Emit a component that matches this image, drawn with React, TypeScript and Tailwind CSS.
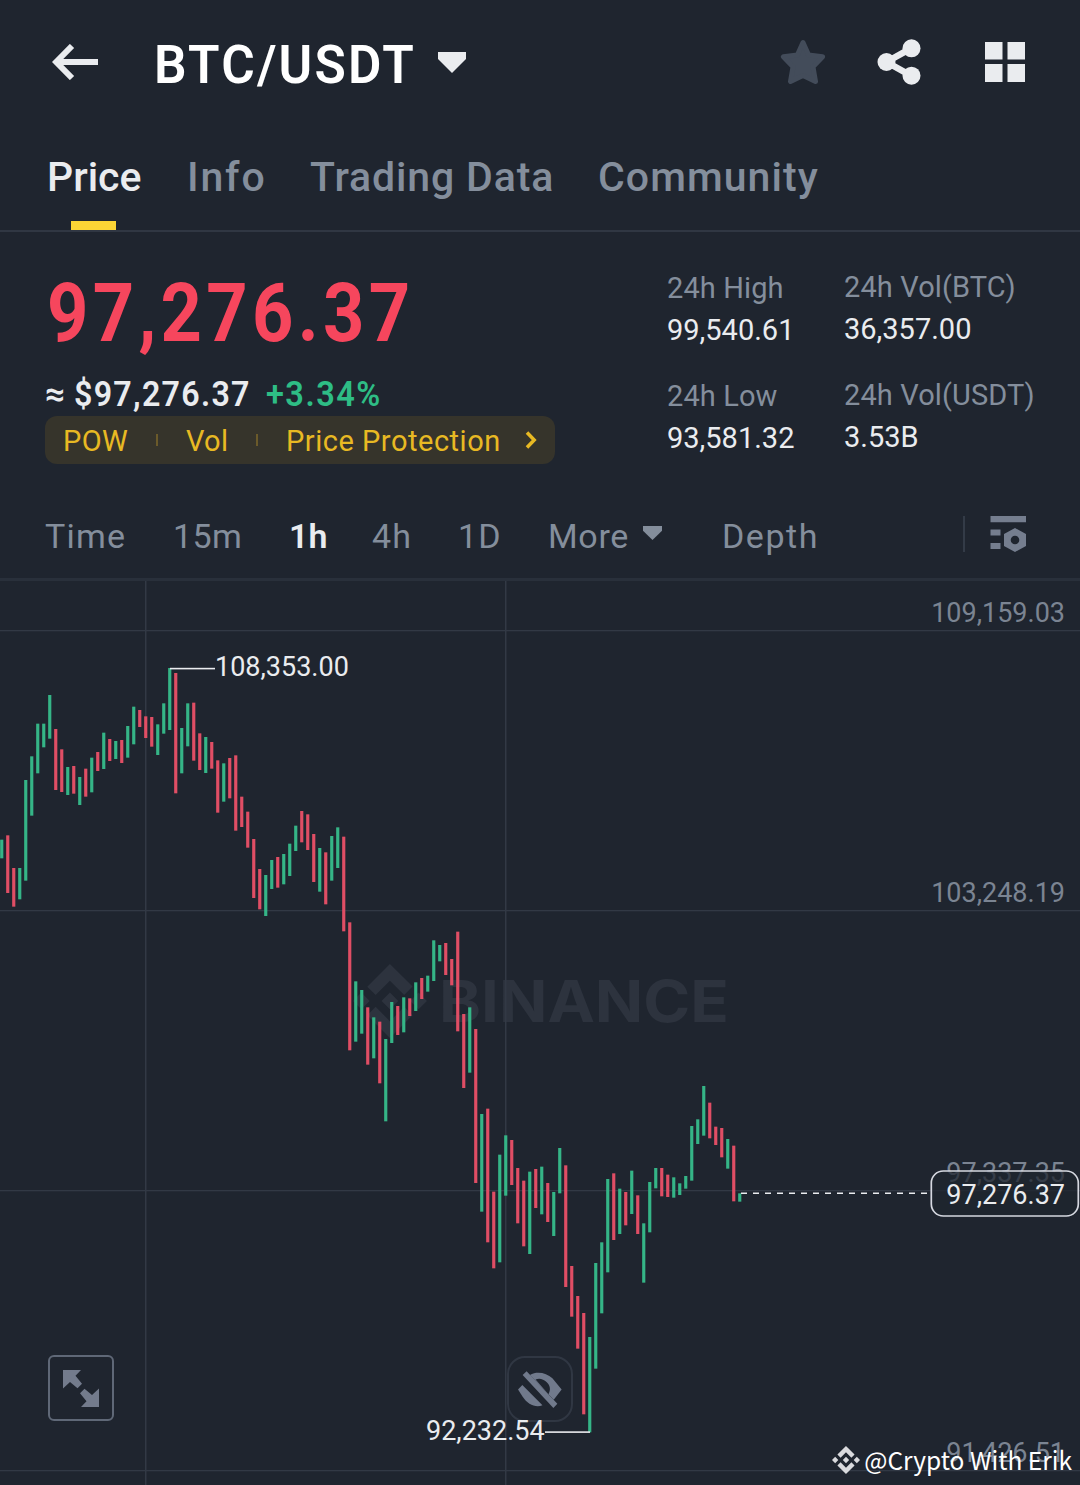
import { clsx } from 'clsx'

type Candle = ['u' | 'd', number, number]

// [direction, high, low] in plot units, 3 units per px, measured from the top of the chart
const CANDLES: Candle[] = [
  ['u', 779, 835], ['d', 766, 939], ['d', 864, 980], ['u', 864, 958], ['u', 600, 902],
  ['u', 529, 707], ['u', 431, 580], ['u', 431, 502], ['u', 345, 476], ['d', 447, 630],
  ['d', 508, 636], ['u', 561, 645], ['d', 558, 641], ['u', 591, 675], ['d', 566, 650],
  ['u', 533, 637], ['d', 516, 573], ['u', 458, 567], ['d', 477, 543], ['u', 483, 537],
  ['d', 480, 549], ['u', 438, 533], ['u', 380, 493], ['d', 390, 441], ['d', 409, 474],
  ['d', 411, 500], ['u', 433, 525], ['u', 370, 461], ['u', 264, 450], ['d', 279, 640],
  ['u', 444, 580], ['u', 370, 499], ['d', 368, 542], ['d', 460, 570], ['u', 471, 579],
  ['d', 486, 566], ['d', 541, 698], ['u', 550, 665], ['d', 534, 655], ['d', 526, 752],
  ['d', 650, 741], ['d', 695, 803], ['d', 777, 954], ['d', 867, 988], ['u', 885, 1008],
  ['u', 840, 927], ['d', 831, 923], ['u', 822, 913], ['u', 791, 888], ['u', 737, 813],
  ['d', 693, 787], ['d', 703, 810], ['d', 762, 906], ['u', 804, 935], ['d', 817, 973],
  ['u', 768, 902], ['u', 742, 864], ['d', 770, 1054], ['d', 1027, 1411], ['u', 1204, 1385],
  ['u', 1230, 1361], ['d', 1282, 1454], ['u', 1312, 1435], ['d', 1325, 1510], ['u', 1377, 1624],
  ['u', 1266, 1389], ['d', 1278, 1365], ['u', 1252, 1357], ['d', 1255, 1308], ['u', 1207, 1293],
  ['d', 1194, 1257], ['u', 1187, 1235], ['u', 1081, 1203], ['u', 1095, 1144], ['d', 1089, 1185],
  ['d', 1137, 1216], ['d', 1055, 1354], ['d', 1302, 1524], ['u', 1282, 1478], ['d', 1347, 1809],
  ['u', 1602, 1895], ['d', 1586, 1987], ['d', 1835, 2065], ['u', 1724, 2047], ['u', 1666, 1847],
  ['d', 1680, 1815], ['d', 1764, 1930], ['d', 1802, 1999], ['u', 1775, 2022], ['d', 1767, 1884],
  ['u', 1760, 1903], ['d', 1809, 1926], ['u', 1836, 1968], ['u', 1704, 1840], ['d', 1756, 2121],
  ['d', 2058, 2210], ['d', 2148, 2306], ['d', 2199, 2503], ['u', 2271, 2557], ['u', 2049, 2366],
  ['u', 1987, 2200], ['u', 1797, 2077], ['d', 1780, 1980], ['u', 1826, 1962], ['d', 1836, 1936],
  ['u', 1772, 1902], ['d', 1846, 1962], ['u', 1930, 2108], ['u', 1806, 1957], ['u', 1764, 1825],
  ['d', 1764, 1849], ['d', 1784, 1851], ['u', 1792, 1853], ['u', 1810, 1845], ['u', 1788, 1826],
  ['u', 1638, 1802], ['u', 1618, 1692], ['u', 1518, 1667], ['d', 1568, 1675], ['d', 1640, 1695],
  ['d', 1644, 1732], ['u', 1677, 1766], ['d', 1697, 1864], ['u', 1840, 1865],
]

const GRID_Y = [50, 330, 610, 890]
const GRID_X = [145, 505]

const TABS = [
  { label: 'Price', className: 'w-[93px] text-[#eaecef]' },
  { label: 'Info', className: 'w-[78px] pl-px tracking-[0.045em]' },
  { label: 'Trading Data', className: 'w-[242px] tracking-[0.021em]' },
  { label: 'Community', className: 'w-[220px] tracking-[0.026em]' },
]

const STATS = [
  [
    { label: '24h High', value: '99,540.61' },
    { label: '24h Low', value: '93,581.32' },
  ],
  [
    { label: '24h Vol(BTC)', value: '36,357.00' },
    { label: '24h Vol(USDT)', value: '3.53B' },
  ],
]

const BINANCE_PATH =
  'M16.624 13.9202l2.7175 2.7154-7.353 7.353-7.353-7.352 2.7175-2.7164 4.6355 4.6595 4.6356-4.6595zm4.6366-4.6366L24 12l-2.7154 2.7164L18.5682 12l2.6924-2.7164zm-9.272.001l2.7163 2.6914-2.7164 2.7174v-.001L9.2721 12l2.7164-2.7154zm-9.2722-.001L5.4088 12l-2.6914 2.6924L0 12l2.7164-2.7164zM11.9885.0115l7.353 7.329-2.7174 2.7154-4.6356-4.6356-4.6355 4.6595-2.7174-2.7154 7.353-7.353z'

function Caret({ className }: { className: string }) {
  return (
    <svg viewBox="0 0 28 21" preserveAspectRatio="none" className={className} fill="currentColor">
      <path d="M0 0h28v7L14 21 0 7z" />
    </svg>
  )
}

function Header() {
  return (
    <header className="flex h-[124px] items-center pl-[52px] pr-[54px] text-[#eaecef]">
      <svg viewBox="0 0 46 36" className="h-9 w-[46px]" fill="none" stroke="currentColor" strokeWidth="6">
        <path d="M46 18H4M20 2L4.2 18 20 34" />
      </svg>
      <h1 className="ml-[56px] mt-1.5 w-[284px] text-[54px] font-semibold leading-none text-white">
        <span className="inline-block origin-left scale-x-[0.95] whitespace-nowrap tracking-[0.043em]">BTC/USDT</span>
      </h1>
      <Caret className="h-[21px] w-7" />

      <div className="ml-auto flex items-center">
        <svg viewBox="0 0 46 46" className="h-[46px] w-[46px] text-[#434c5a]" fill="currentColor" stroke="currentColor" strokeWidth="5" strokeLinejoin="round">
          <path d="M23 3.500l5.600 12.500 14 1.800-9.600 10L35.500 42.500 23 36.500 10.500 42.500 13 27.800l-9.600-10 14-1.800z" />
        </svg>
        <svg viewBox="0 0 44 46" className="ml-[51px] h-[46px] w-11" fill="currentColor">
          <path d="M34 9.300L9.500 23 34 36.700" fill="none" stroke="currentColor" strokeWidth="6.500" />
          <circle cx="9.500" cy="23" r="9" />
          <circle cx="34.500" cy="9.300" r="9" />
          <circle cx="34.500" cy="36.700" r="9" />
        </svg>
        <svg viewBox="0 0 41 40" className="ml-16 h-10 w-[41px]" fill="currentColor">
          <path d="M0 0h17.500v17.500H0zM22.500 0h17.500v17.500H22.500zM0 22h17.500v18H0zM22.500 22h17.500v18H22.500z" />
        </svg>
      </div>
    </header>
  )
}

function Tabs() {
  return (
    <nav className="flex h-[108px] gap-[46px] border-b-2 border-[#303743] pl-[47px] text-[41px] font-medium text-[#848e9c]">
      {TABS.map((tab, i) => (
        <div key={tab.label} className="flex flex-col items-center justify-between">
          <span className={clsx('mt-[22px] whitespace-nowrap leading-[62px]', tab.className)}>{tab.label}</span>
          {i === 0 && <span className="h-[9px] w-[45px] bg-[#fcd535]" />}
        </div>
      ))}
    </nav>
  )
}

function Summary() {
  return (
    <section className="flex h-[262px] pl-[45px]">
      <div className="w-[622px] pt-[38px]">
        <div className="h-[86px] pl-0.5 text-[82px] font-bold leading-[86px] text-[#f6465d]">
          <span className="inline-block origin-left scale-x-[0.88] whitespace-nowrap tracking-[0.06em]">97,276.37</span>
        </div>
        <div className="mt-[19px] flex h-[38px] items-center whitespace-nowrap text-[35px] font-semibold leading-none">
          <span className="w-[29px] text-[#eaecef]">≈</span>
          <span className="w-[192px] origin-left scale-x-[0.92] tracking-[0.04em] text-[#eaecef]">$97,276.37</span>
          <span className="origin-left scale-x-[0.93] tracking-[0.045em] text-[#2ebd85]">+3.34%</span>
        </div>
        <div className="mt-[3px] flex h-12 w-[510px] items-center rounded-xl bg-[#36342b] pl-[18px] pr-[18px] text-[29px] leading-none text-[#e8b923]">
          <span className="mt-0.5 w-[93px] tracking-[0.015em]">POW</span>
          <i className="h-3 w-[2px] bg-[#6b5a2a]" />
          <span className="ml-7 mt-0.5 w-[70px] tracking-[0.01em]">Vol</span>
          <i className="h-3 w-[2px] bg-[#6b5a2a]" />
          <span className="ml-7 mt-0.5 whitespace-nowrap tracking-[0.018em]">Price Protection</span>
          <svg viewBox="0 0 12 18" className="ml-auto h-[18px] w-3" fill="none" stroke="currentColor" strokeWidth="3.500">
            <path d="M2 1.500L9.200 9 2 16.500" />
          </svg>
        </div>
      </div>

      {STATS.map((column, c) => (
        <dl key={c} className={clsx('flex flex-col gap-6 whitespace-nowrap text-[29px]', c === 0 ? 'w-[177px] pt-[35px]' : 'pt-[34px]')}>
          {column.map((stat) => (
            <div key={stat.label}>
              <dt className="leading-[42px] tracking-[0.004em] text-[#848e9c]">{stat.label}</dt>
              <dd className="leading-[42px] text-[#eaecef]">{stat.value}</dd>
            </div>
          ))}
        </dl>
      ))}
    </section>
  )
}

function Intervals() {
  return (
    <div className="flex h-[87px] items-center whitespace-nowrap border-b-[3px] border-[#29303b] pl-[45px] text-[34px] text-[#848e9c]">
      <span className="w-32 tracking-[0.035em]">Time</span>
      <span className="w-[116px] tracking-[0.01em]">15m</span>
      <span className="w-[83px] font-semibold text-[#eaecef]">1h</span>
      <span className="w-[86px] tracking-[0.03em]">4h</span>
      <span className="w-[90px] tracking-[0.03em]">1D</span>
      <span className="w-[95px] tracking-[0.02em]">More</span>
      <Caret className="mb-1.5 h-[14px] w-[19px]" />
      <span className="ml-[60px] tracking-[0.045em]">Depth</span>
      <i className="mb-1 ml-auto h-9 w-[2px] bg-[#333b47]" />
      <svg viewBox="0 0 36 36" className="mb-1 ml-[25px] mr-[54px] h-9 w-9 text-[#757e8f]" fill="currentColor">
        <path d="M.5 0h35.500v6.300H.5zM.5 13.500h10v6H.5zM.5 27h10v6H.5z" />
        <path fillRule="evenodd" d="M25 12l11 6v12l-11 6-11-6V18zM25 19.700a4.300 4.300 0 100 8.600 4.300 4.300 0 000-8.600z" />
      </svg>
    </div>
  )
}

function Chart() {
  return (
    <section className="relative h-[904px] overflow-hidden">
      <svg viewBox="0 1 1080 904" className="block h-[904px] w-full">
        {/* Watermark */}
        <g fill="#2d333e">
          <path d={BINANCE_PATH} transform="translate(353 384) scale(3.08)" />
          <text x="439" y="442" textLength="290" lengthAdjust="spacingAndGlyphs" className="font-['Inter'] text-[58px] font-bold">BINANCE</text>
        </g>

        {/* Grid */}
        <g fill="#323945">
          {GRID_Y.map((y) => <rect key={y} x="0" y={y} width="1080" height="1.300" />)}
          {GRID_X.map((x) => <rect key={x} x={x} y="0" width="1.500" height="905" />)}
        </g>

        {/* Axis labels */}
        <g fill="#7b8492" textAnchor="end" className="text-[27px]">
          <text x="1065" y="42">109,159.03</text>
          <text x="1065" y="322">103,248.19</text>
          <text x="1065" y="602">97,337.35</text>
          <text x="1065" y="882">91,426.51</text>
        </g>

        {/* High / low bars */}
        <g transform="scale(0.33333)">
          {CANDLES.map(([dir, high, low], i) => (
            <rect key={i} x={i * 18 + 0.5} y={high} width="9.500" height={low - high} fill={dir === 'u' ? '#35b587' : '#e04e65'} />
          ))}
        </g>

        {/* Range markers */}
        <g fill="#eaecef" className="text-[27px]">
          <rect x="170" y="87.800" width="45" height="1.600" />
          <text x="215" y="96">108,353.00</text>
          <rect x="545" y="851.300" width="45" height="1.600" />
        </g>

        {/* Last price */}
        <path d="M741 613.300H929" stroke="#eaecef" strokeWidth="1.500" strokeDasharray="6 6" />
        <rect x="931.300" y="591" width="147" height="45" rx="12" fill="#1f252f" fillOpacity="0.75" stroke="#d5d8e0" strokeWidth="1.700" />
        <text x="1065" y="624" textAnchor="end" fill="#eaecef" className="text-[27px]">97,276.37</text>
      </svg>

      <button className="absolute left-12 top-[774px] flex h-[66px] w-[66px] items-center justify-center rounded-md border-2 border-[#5f6877] text-[#737b8c]">
        <svg viewBox="0 0 36 37" className="h-[37px] w-9" fill="currentColor">
          <path d="M0 0h18l-5.500 5.700 6.500 8-4.500 4.500L7 12l-7 6.500z" />
          <path d="M0 0h18l-5.500 5.700 6.500 8-4.500 4.500L7 12l-7 6.500z" transform="rotate(180 18 18.500)" />
        </svg>
      </button>

      <button className="absolute left-[507px] top-[775px] flex h-[66px] w-[66px] items-center justify-center rounded-[18px] border-2 border-[#303743] bg-[#1f252f] text-[#717a8c]">
        {/* Eye cut by a diagonal bar, with a gap on its lower side */}
        <svg viewBox="114 122 133 112" className="h-[37px] w-11" fill="currentColor">
          <path d="M128 134l12-11 93 98-12 13z" />
          <path d="M127 164l61 62c-22 8-45-3-60-26l-14-22z" />
          <path fillRule="evenodd" d="M150 134c22-12 50-6 68 10l28 34-24 31zM167 148l39 44c8-14 5-26-5-36-10-9-22-13-34-8z" />
        </svg>
      </button>

      <svg viewBox="0 0 160 40" className="absolute left-[420px] top-[830px] h-10 w-40">
        <text x="6" y="28.500" fill="#eaecef" className="text-[27px]">92,232.54</text>
      </svg>

      {/* Author tag */}
      <div className="absolute bottom-[7px] right-2 flex items-center whitespace-nowrap font-['Noto_Sans_CJK_SC',sans-serif] text-[24.5px] leading-9 text-white">
        <svg viewBox="0 0 24 24" className="mr-1 h-7 w-7" fill="#d9dadd">
          <path d={BINANCE_PATH} />
        </svg>
        @Crypto With Erik
      </div>
    </section>
  )
}

export default function App() {
  return (
    <main className="h-[1485px] w-[1080px] overflow-hidden bg-[#1f252f] font-['Roboto',sans-serif]">
      <Header />
      <Tabs />
      <Summary />
      <Intervals />
      <Chart />
    </main>
  )
}
